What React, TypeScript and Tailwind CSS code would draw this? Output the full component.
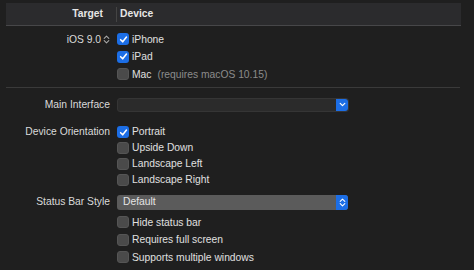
import React from "react";

const font = { fontFamily: '"Liberation Sans", Arial, sans-serif' };

const Check = ({ on }: { on?: boolean }) =>
  on ? (
    <span className="flex h-[12px] w-[12px] items-center justify-center rounded-[3px] bg-[#1c6ee6]">
      <svg width="9" height="9" viewBox="0 0 10 10" fill="none">
        <path d="M1.8 5.2 L4.1 7.6 L8.3 2.2" stroke="white" strokeWidth="1.7" strokeLinecap="round" strokeLinejoin="round" />
      </svg>
    </span>
  ) : (
    <span className="block h-[12px] w-[12px] rounded-[3px] bg-[#4a4a4a] border border-[#555]" />
  );

const Row = ({
  label,
  children,
  h = "h-[17.5px]",
}: {
  label?: React.ReactNode;
  children: React.ReactNode;
  h?: string;
}) => (
  <div className={`flex items-center ${h}`}>
    <div className="flex w-[117px] shrink-0 items-center justify-end pr-[7px] text-[#dadada]">{label}</div>
    <div className="flex flex-1 items-center">{children}</div>
  </div>
);

const Box = ({ on, text, extra }: { on?: boolean; text: string; extra?: string }) => (
  <div className="flex items-center gap-[3px]">
    <Check on={on} />
    <span className="text-[#e0e0e0]">{text}</span>
    {extra && <span className="ml-[3px] text-[#8c8c8c]">{extra}</span>}
  </div>
);

const Chevrons = () => (
  <svg width="7" height="9" viewBox="0 0 7 9" fill="none">
    <path d="M1.2 3.3 L3.5 1.2 L5.8 3.3 M1.2 5.7 L3.5 7.8 L5.8 5.7" stroke="currentColor" strokeWidth="1.1" strokeLinecap="round" strokeLinejoin="round" />
  </svg>
);

export default function App() {
  return (
    <div className="h-[270px] w-[474px] overflow-hidden bg-[#1f1f1f] pt-[3px] text-[10.3px]" style={font}>
      {/* Header */}
      <div className="mx-[6px] flex h-[23px] w-[455px] items-center border-b border-[#474749] bg-[#2b2b2d]">
        <div className="w-[97px] text-right font-bold text-[#e6e6e6]">Target</div>
        <div className="ml-[13px] h-[15px] w-px bg-[#444]" />
        <div className="ml-[3px] font-bold text-[#e6e6e6]">Device</div>
      </div>

      <div className="pt-[4.5px]">
        <Row
          label={
            <span className="flex items-center gap-[2px]">
              iOS 9.0
              <span className="text-[#aaa]">
                <Chevrons />
              </span>
            </span>
          }
        >
          <Box on text="iPhone" />
        </Row>
        <Row>
          <Box on text="iPad" />
        </Row>
        <Row>
          <Box text="Mac" extra="(requires macOS 10.15)" />
        </Row>
      </div>

      <div className="mx-[6px] mt-[3.5px] h-px w-[454px] bg-[#3a3a3a]" />

      <div className="pt-[8.5px]">
        <Row label="Main Interface" h="h-[17px]">
          <div className="flex h-[14px] w-[232px] items-stretch rounded-[3px] border border-[#353535] bg-[#2b2b2b]">
            <div className="flex-1" />
            <div className="flex w-[12px] items-center justify-center rounded-r-[3px] bg-[#1c6ee6] text-white">
              <svg width="7" height="5" viewBox="0 0 7 5" fill="none">
                <path d="M1.2 1.3 L3.5 3.6 L5.8 1.3" stroke="currentColor" strokeWidth="1.2" strokeLinecap="round" strokeLinejoin="round" />
              </svg>
            </div>
          </div>
        </Row>
      </div>

      <div className="pt-[11px]">
        <Row label="Device Orientation" h="h-[16px]">
          <Box on text="Portrait" />
        </Row>
        <Row h="h-[16px]">
          <Box text="Upside Down" />
        </Row>
        <Row h="h-[16px]">
          <Box text="Landscape Left" />
        </Row>
        <Row h="h-[16px]">
          <Box text="Landscape Right" />
        </Row>
      </div>

      <div className="pt-[6px]">
        <Row label="Status Bar Style" h="h-[16px]">
          <div className="flex h-[15px] w-[231px] items-stretch rounded-[3px] bg-[#5b5b5b]">
            <div className="flex flex-1 items-center pl-[6px] text-[#e4e4e4]">Default</div>
            <div className="flex w-[12px] items-center justify-center rounded-r-[3px] bg-[#1c6ee6] text-white">
              <Chevrons />
            </div>
          </div>
        </Row>
        <div className="pt-[3.5px]">
          <Row>
            <Box text="Hide status bar" />
          </Row>
          <Row>
            <Box text="Requires full screen" />
          </Row>
          <Row>
            <Box text="Supports multiple windows" />
          </Row>
        </div>
      </div>
    </div>
  );
}
